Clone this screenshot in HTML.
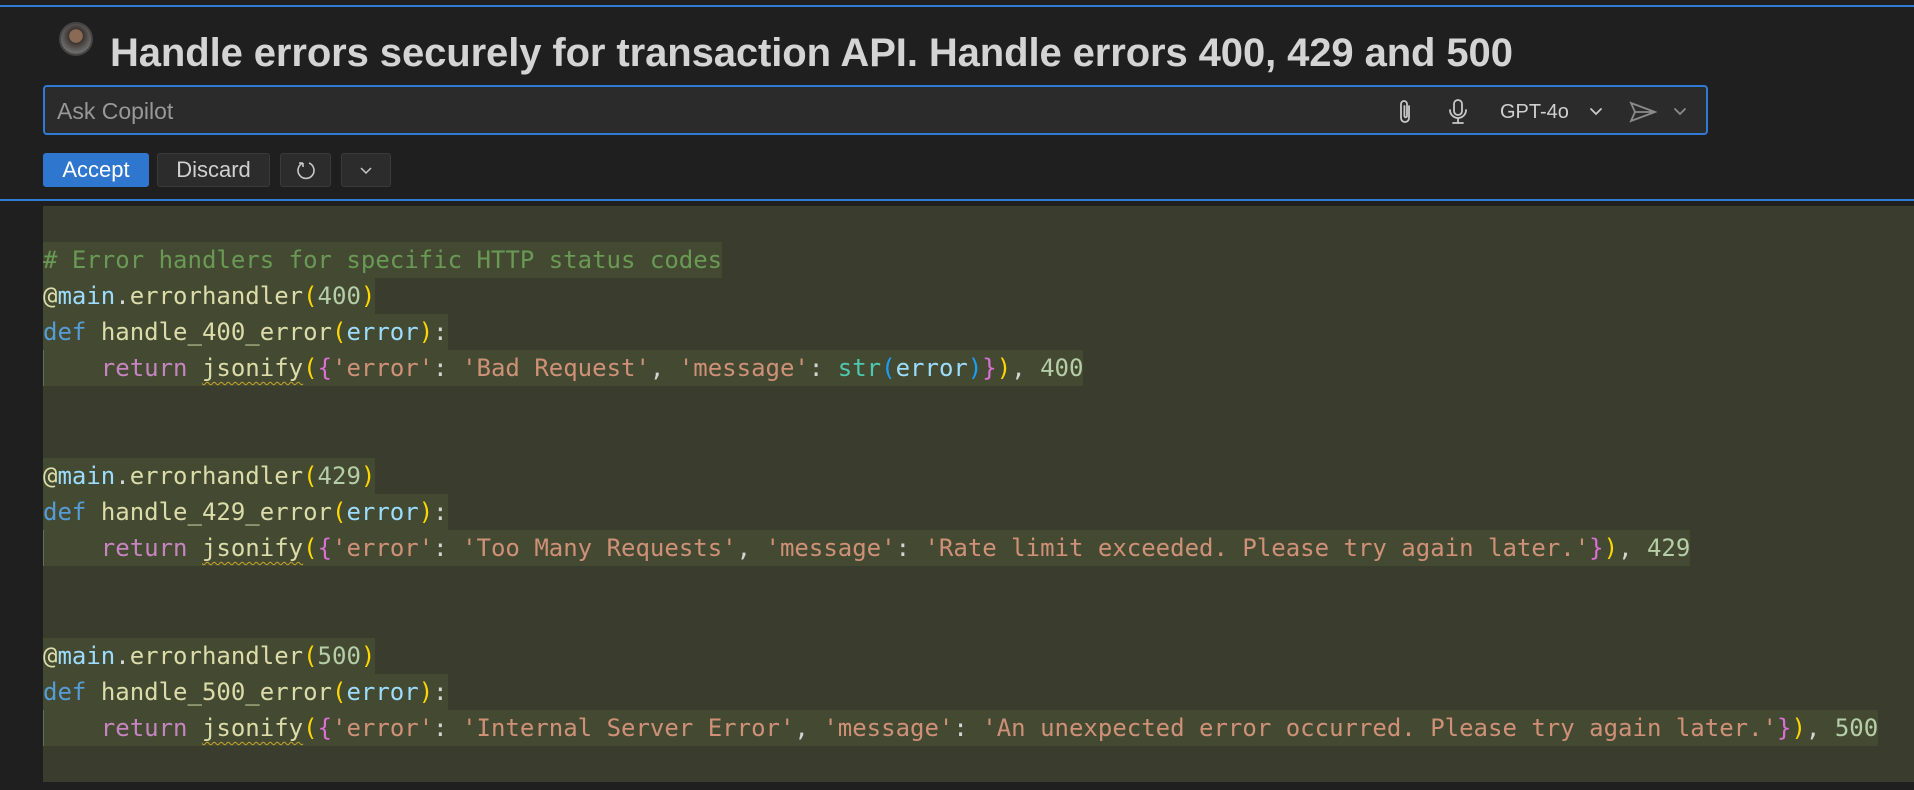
<!DOCTYPE html>
<html><head><meta charset="utf-8"><style>
*{margin:0;padding:0;box-sizing:border-box}
body{width:1914px;height:790px;background:#1f1f1f;position:relative;overflow:hidden;font-family:"Liberation Sans",sans-serif}
.bl{position:absolute;left:0;width:1914px;height:2px;background:#2f7bd3}
.title{position:absolute;left:110px;top:31px;font-size:40px;font-weight:bold;color:#d4d4d4;white-space:nowrap;letter-spacing:-0.1px}
.av{position:absolute;left:59px;top:22px;width:34px;height:34px;border-radius:50%;background:radial-gradient(circle at 50% 40%,#8a6a55 0 28%,#3b3430 30%,#6d6d6d 70%,#2a2a2a 100%);border:2px solid #444}
.box{position:absolute;left:43px;top:85px;width:1665px;height:50px;border:2px solid #2f7bd3;border-radius:4px;background:#2b2b2b}
.ph{position:absolute;left:12px;top:11px;font-size:23px;color:#989898}
.btn{position:absolute;top:153px;height:34px;border-radius:3px;background:#2c2c2c;border:1px solid #3a3a3a;color:#d0d0d0;font-size:22px;text-align:center;line-height:32px}
.code{position:absolute;left:43px;top:206px;width:1871px;height:576px;background:#3a3d2e}
.ln{position:absolute;left:0;height:36px;line-height:36px;font-family:"DejaVu Sans Mono","Liberation Mono",monospace;font-size:24px;white-space:pre;background:#444a31;color:#d4d4d4}
.c{color:#6a9955}.k{color:#569cd6}.f{color:#dcdcaa}.v{color:#9cdcfe}.p{color:#ffd700}.n{color:#b5cea8}.r{color:#c586c0}.s{color:#ce9178}.b{color:#da70d6}.t{color:#4ec9b0}.q{color:#179fff}
.sq{text-decoration:underline wavy #c9a628;text-decoration-thickness:1px;text-underline-offset:5px}
.ig{position:absolute;left:0;width:1px;height:36px;background:#6a6a5a}
</style></head><body>
<div class="bl" style="top:5px"></div>
<div class="av"></div>
<div class="title">Handle errors securely for transaction API. Handle errors 400, 429 and 500</div>
<div class="box"><div class="ph">Ask Copilot</div>
<svg style="position:absolute;left:1350px;top:10px" width="300" height="30" viewBox="0 0 300 30" fill="none" stroke="#c8c8c8" stroke-width="1.8" stroke-linecap="round">
<path d="M14 9 v12 a4 4 0 0 1 -8 0 v-14 a3 3 0 0 1 6 0 v12 a1.3 1.3 0 0 1 -2.6 0 v-10"/>
<rect x="59" y="3" width="8" height="15" rx="4"/><path d="M55 13 a8 8 0 0 0 16 0 M63 21 v5 M58 26 h10"/>
<text x="105" y="21" fill="#d0d0d0" stroke="none" font-family="Liberation Sans" font-size="20">GPT-4o</text>
<path d="M196 12 l5 5 l5 -5"/>
<path d="M236 6 l24 9 l-24 9 l4 -9 z M240 15 h20" stroke="#8a8a8a"/>
<path d="M280 12 l5 5 l5 -5" stroke="#8a8a8a"/>
</svg></div>
<div class="btn" style="left:43px;width:106px;background:#2f76cf;border-color:#2f76cf;color:#fff">Accept</div>
<div class="btn" style="left:157px;width:113px">Discard</div>
<div class="btn" style="left:280px;width:51px"><svg width="24" height="24" viewBox="0 0 24 24" style="margin-top:4px" fill="none" stroke="#c8c8c8" stroke-width="1.6"><path d="M9 5 a8 8 0 1 0 6 0 M9 5 v4 M9 5 h-4"/></svg></div>
<div class="btn" style="left:341px;width:50px"><svg width="20" height="20" viewBox="0 0 20 20" style="margin-top:6px" fill="none" stroke="#c8c8c8" stroke-width="1.5"><path d="M5 8 l5 5 l5 -5"/></svg></div>
<div class="bl" style="top:199px"></div>
<div class="code">
<div class="ln" style="top:36px"><span class="c"># Error handlers for specific HTTP status codes</span></div>
<div class="ln" style="top:72px"><span class="f">@</span><span class="v">main</span>.<span class="f">errorhandler</span><span class="p">(</span><span class="n">400</span><span class="p">)</span></div>
<div class="ln" style="top:108px"><span class="k">def</span> <span class="f">handle_400_error</span><span class="p">(</span><span class="v">error</span><span class="p">)</span>:</div>
<div class="ln" style="top:144px">    <span class="r">return</span> <span class="f sq">jsonify</span><span class="p">(</span><span class="b">{</span><span class="s">'error'</span>: <span class="s">'Bad Request'</span>, <span class="s">'message'</span>: <span class="t">str</span><span class="q">(</span><span class="v">error</span><span class="q">)</span><span class="b">}</span><span class="p">)</span>, <span class="n">400</span></div>
<div class="ig" style="top:144px"></div>
<div class="ln" style="top:252px"><span class="f">@</span><span class="v">main</span>.<span class="f">errorhandler</span><span class="p">(</span><span class="n">429</span><span class="p">)</span></div>
<div class="ln" style="top:288px"><span class="k">def</span> <span class="f">handle_429_error</span><span class="p">(</span><span class="v">error</span><span class="p">)</span>:</div>
<div class="ln" style="top:324px">    <span class="r">return</span> <span class="f sq">jsonify</span><span class="p">(</span><span class="b">{</span><span class="s">'error'</span>: <span class="s">'Too Many Requests'</span>, <span class="s">'message'</span>: <span class="s">'Rate limit exceeded. Please try again later.'</span><span class="b">}</span><span class="p">)</span>, <span class="n">429</span></div>
<div class="ig" style="top:324px"></div>
<div class="ln" style="top:432px"><span class="f">@</span><span class="v">main</span>.<span class="f">errorhandler</span><span class="p">(</span><span class="n">500</span><span class="p">)</span></div>
<div class="ln" style="top:468px"><span class="k">def</span> <span class="f">handle_500_error</span><span class="p">(</span><span class="v">error</span><span class="p">)</span>:</div>
<div class="ln" style="top:504px">    <span class="r">return</span> <span class="f sq">jsonify</span><span class="p">(</span><span class="b">{</span><span class="s">'error'</span>: <span class="s">'Internal Server Error'</span>, <span class="s">'message'</span>: <span class="s">'An unexpected error occurred. Please try again later.'</span><span class="b">}</span><span class="p">)</span>, <span class="n">500</span></div>
<div class="ig" style="top:504px"></div>
</div>
</body></html>
